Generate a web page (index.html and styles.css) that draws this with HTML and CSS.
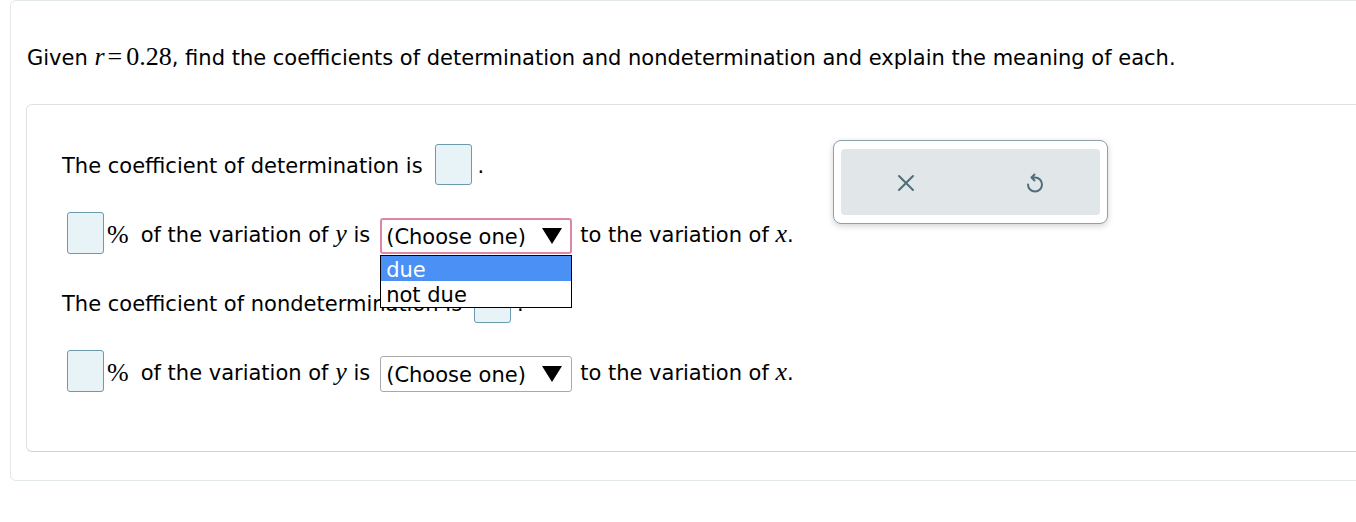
FILE: index.html
```html
<!DOCTYPE html>
<html>
<head>
<meta charset="utf-8">
<link rel="stylesheet" href="styles.css">
</head>
<body>
<div class="outer">
  <p class="question">Given <span class="m mi">r</span><span class="m eq">=</span><span class="m">0.28</span>, find the coefficients of determination and nondetermination and explain the meaning of each.</p>
  <div class="inner">
    <div class="work">
      <div class="row">
        <span class="t">The coefficient of determination is</span>
        <span class="box box-a"></span>
        <span class="t dot">.</span>
      </div>
      <div class="row">
        <span class="box box-b"></span>
        <span class="m pct">%</span>
        <span class="t sp">of the variation of <span class="m mi">y</span> is</span>
        <div class="select-wrap"><div class="select focus"><span>(Choose one)</span><span class="arrow"></span></div><div class="list"><div class="opt sel">due</div><div class="opt">not due</div></div></div>
        <span class="t">to the variation of <span class="m mi">x</span>.</span>
      </div>
      <div class="row">
        <span class="t">The coefficient of nondetermination is</span>
        <span class="box box-a"></span>
        <span class="t dot">.</span>
      </div>
      <div class="row">
        <span class="box box-b"></span>
        <span class="m pct">%</span>
        <span class="t sp">of the variation of <span class="m mi">y</span> is</span>
        <div class="select-wrap"><div class="select"><span>(Choose one)</span><span class="arrow"></span></div></div>
        <span class="t">to the variation of <span class="m mi">x</span>.</span>
      </div>
    </div>
    <div class="panel">
      <div class="panel-in">
        <svg class="ic" width="24" height="24" viewBox="0 0 24 24" fill="none" stroke="#4e6e7b" stroke-width="2" stroke-linecap="round"><path d="M5 5 L19 19 M19 5 L5 19"/></svg>
        <svg class="ic" width="24" height="24" viewBox="0 0 24 24" fill="none" stroke="#4e6e7b" stroke-width="2" stroke-linecap="round" stroke-linejoin="round"><path d="M9 6.5 H12 A7 7 0 1 1 5 13.5"/><path d="M11.5 3.5 L8.5 6.5 L11.5 9.5"/></svg>
      </div>
    </div>
  </div>
</div>
</body>
</html>
```
FILE: styles.css
```css
html, body {
  margin: 0;
  padding: 0;
  background: #fff;
}
body {
  font-family: "DejaVu Sans", Verdana, sans-serif;
  font-size: 21px;
  color: #000;
  overflow: hidden;
}
.outer {
  margin-left: 10px;
  width: 1380px;
  height: 481px;
  border: 1px solid #e2e7ea;
  border-radius: 6px;
  box-sizing: border-box;
}
.question {
  margin: 0;
  padding: 45px 0 0 16px;
  height: 58px;
  line-height: 25px;
  white-space: nowrap;
}
.m {
  font-family: "Liberation Serif", "Times New Roman", serif;
  font-size: 26px;
  line-height: 20px;
}
.mi { font-style: italic; }
.eq { margin: 0 4px 0 3px; }
.inner {
  margin-left: 15px;
  height: 348px;
  border: 1px solid #dde1e4;
  border-bottom-color: #d3d3d3;
  border-radius: 6px;
  box-sizing: border-box;
  display: flex;
  align-items: flex-start;
}
.work {
  width: 806px;
  flex: none;
  box-sizing: border-box;
  padding: 38px 0 0 35px;
  display: flex;
  flex-direction: column;
  gap: 27px;
}
.row {
  height: 42px;
  display: flex;
  align-items: center;
  white-space: nowrap;
}
.t { padding-top: 3px; }
.box {
  display: inline-block;
  width: 35px;
  height: 39px;
  background: #e8f3f8;
  border: 1px solid #6b9aab;
  border-radius: 3px;
}
.box-a { margin-left: 12px; }
.box-b { margin-left: 5px; height: 40px; }
.dot { margin-left: 6px; }
.pct { margin-left: 3px; padding-top: 3px; }
.sp { margin-left: 12px; }
.select-wrap {
  position: relative;
  margin: 5px 8px 0 10px;
}
.select {
  display: flex;
  align-items: center;
  width: 192px;
  height: 36px;
  box-sizing: border-box;
  border: 1px solid #a9a9a9;
  border-radius: 3px;
  padding: 3px 0 0 5px;
}
.select.focus {
  border: 2px solid #dc87a6;
  padding-left: 4px;
}
.arrow {
  margin-left: 16px;
  margin-top: -2px;
  width: 0;
  height: 0;
  border-left: 10px solid transparent;
  border-right: 10px solid transparent;
  border-top: 16px solid #000;
}
.list {
  position: absolute;
  left: 0;
  top: 37px;
  width: 192px;
  box-sizing: border-box;
  border: 1px solid #000;
  background: #fff;
  z-index: 2;
}
.opt {
  height: 25.5px;
  line-height: 28px;
  padding-left: 5px;
}
.opt.sel {
  background: #4a90f5;
  color: #fff;
}
.panel {
  margin-top: 35px;
  width: 275px;
  flex: none;
  height: 84px;
  box-sizing: border-box;
  border: 1px solid #8da1a9;
  border-radius: 8px;
  background: #fff;
  padding: 8px 7px;
  box-shadow: 0 2px 6px rgba(0,0,0,0.18);
}
.panel-in {
  height: 66px;
  background: #e1e6e9;
  border-radius: 4px;
  display: flex;
  align-items: center;
  justify-content: space-around;
  padding-top: 2px;
  box-sizing: border-box;
}
```
